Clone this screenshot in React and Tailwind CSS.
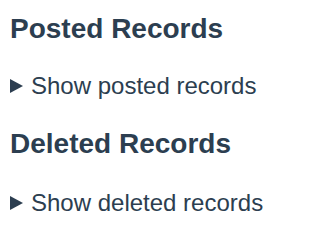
function Tri() {
  return (
    <svg width="13" height="14" viewBox="0 0 13 14" className="block shrink-0 w-[13px] h-[14px]">
      <path d="M0 0 L13 7 L0 14 Z" fill="currentColor" />
    </svg>
  );
}

export default function App() {
  return (
    <div className="px-[10px] pt-3 text-[#2c3e50]" style={{ fontFamily: '"Liberation Sans", Arial, sans-serif' }}>
      <h2 className="text-[28px] font-bold leading-[34px]">Posted Records</h2>
      <details className="mt-[22px]">
        <summary className="flex items-center gap-[8px] list-none text-[24px] leading-[36px] cursor-pointer [&::-webkit-details-marker]:hidden">
          <Tri />
          <span>Show posted records</span>
        </summary>
      </details>
      <h2 className="mt-[23px] text-[28px] font-bold leading-[34px]">Deleted Records</h2>
      <details className="mt-[24px]">
        <summary className="flex items-center gap-[8px] list-none text-[24px] leading-[36px] cursor-pointer [&::-webkit-details-marker]:hidden">
          <Tri />
          <span>Show deleted records</span>
        </summary>
      </details>
    </div>
  );
}
